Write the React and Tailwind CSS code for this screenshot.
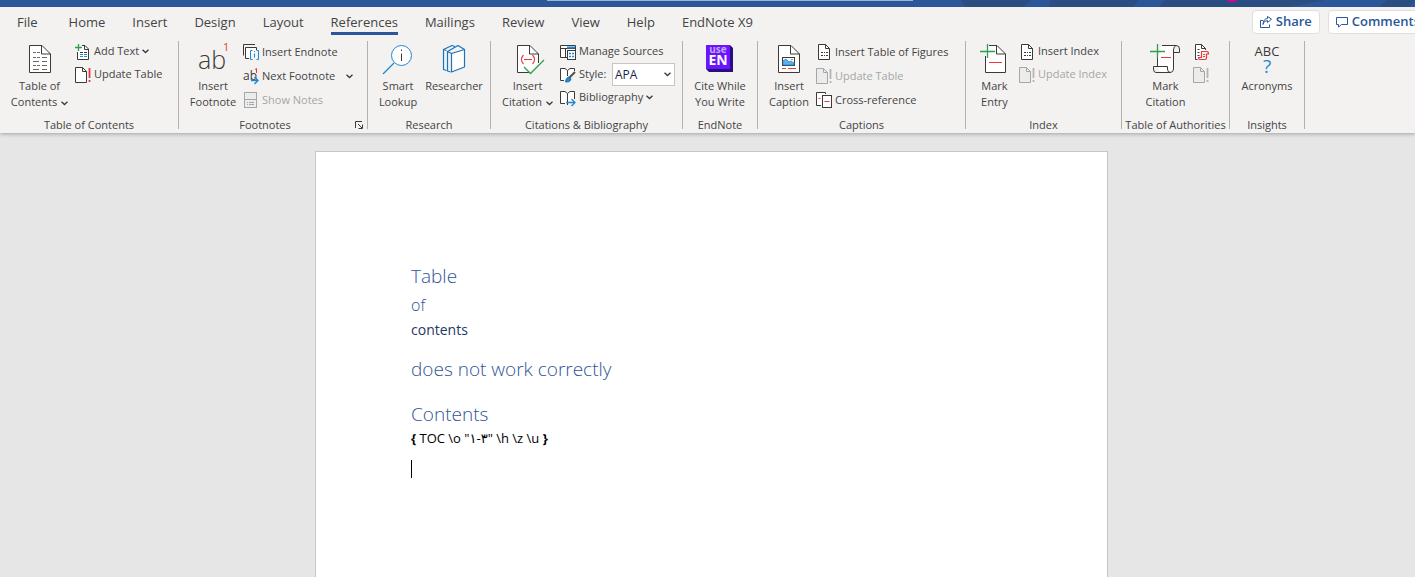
const DARK = "#3b3a39";
const GREY = "#a6a6a6";
const BLUE = "#1e88d0";
const RED = "#e8393c";
const GREEN = "#2f9e4f";

const Svg = ({ w = 16, h = 16, children, className = "" }) => (
  <svg
    width={w}
    height={h}
    viewBox={`0 0 ${w} ${h}`}
    fill="none"
    stroke={DARK}
    className={`shrink-0 overflow-visible ${className}`}
    aria-hidden="true"
  >
    {children}
  </svg>
);

const Chevron = () => (
  <Svg w={7} h={5} className="inline-block">
    <path d="M0.5 0.8 L3.5 3.6 L6.5 0.8" strokeWidth="1.3" />
  </Svg>
);

/* ---------- large icons ---------- */

const TocIcon = () => (
  <Svg w={32} h={32}>
    <path d="M5.5 1.5 H18 L26.5 10 V28.5 H5.5 Z" fill="#fff" />
    <path d="M17.5 1.5 V10 H26.5" />
    <path
      d="M9 8.5h3M13 8.5h3M9 13.5h3M13 13.5h3M18 13.5h5M9 17.5h6M18 17.5h5M9 21.5h3M13 21.5h3M18 21.5h5M9 25.5h6M18 25.5h5"
      stroke="#6b6a69"
    />
  </Svg>
);

const FootnoteIcon = () => (
  <Svg w={32} h={32}>
    <text x="1" y="25" fontSize="25" fontWeight="300" fill={DARK} stroke="none" fontFamily="Open Sans, sans-serif">
      ab
    </text>
    <text x="26" y="7" fontSize="11" fill={RED} stroke="none" fontFamily="Open Sans, sans-serif">
      1
    </text>
  </Svg>
);

const SmartLookupIcon = () => (
  <Svg w={32} h={32}>
    <circle cx="19.5" cy="11.5" r="10" fill="#fff" stroke={BLUE} />
    <path d="M12 19 L1 30" stroke={BLUE} strokeWidth="1.3" />
    <path d="M19.5 9.5 V17 M19.5 5.5 V7" />
  </Svg>
);

const ResearcherIcon = () => (
  <Svg w={32} h={32}>
    <g stroke="#1a73bd" strokeWidth="1.2" strokeLinejoin="round">
      <path d="M8.5 26.5 L5.5 25.5 V5.5 L14 1.5 L17 2.5" />
      <path d="M5.5 5.5 L8.5 6.5" />
      <path d="M12.5 28 L9.5 27 V7.5 L20 1.5 L26.5 5.5" />
      <path d="M9.5 7.5 L13.5 9.5" />
      <path d="M13.5 9.5 L26.5 5.5 V23 L13.5 28 Z" fill="#fff" />
    </g>
  </Svg>
);

const CitationIcon = () => (
  <Svg w={32} h={32}>
    <path d="M17 28.5 H5.5 V1.5 H18 L26.5 10 V19" fill="#fff" />
    <path d="M17.5 1.5 V10 H26.5" />
    <path d="M11.5 11 Q7.5 15.5 11.5 20 M20.5 11 Q24.5 15.5 20.5 20 M12 15.5 H20" stroke={RED} strokeWidth="1.2" />
    <path d="M12 23 L18.5 29.5 L32 16" stroke={GREEN} strokeWidth="1.3" />
  </Svg>
);

const EndNoteIcon = () => (
  <Svg w={32} h={32}>
    <path d="M2 1 H26 L29 4 V28 H5 L2 25 Z" fill="#2a0d80" stroke="none" />
    <rect x="2" y="1" width="24" height="24" fill="#6a14ff" stroke="none" />
    <text x="14" y="9" fontSize="10" fontWeight="700" textAnchor="middle" fill="#c3a3f5" stroke="none" fontFamily="Open Sans, sans-serif">
      use
    </text>
    <text x="14" y="21" fontSize="14" fontWeight="700" textAnchor="middle" fill="#fff" stroke="none" fontFamily="Open Sans, sans-serif">
      EN
    </text>
  </Svg>
);

const CaptionIcon = () => (
  <Svg w={32} h={32}>
    <path d="M5.5 1.5 H18 L26.5 10 V28.5 H5.5 Z" fill="#fff" />
    <path d="M17.5 1.5 V10 H26.5" />
    <rect x="9.5" y="13.5" width="12" height="8" />
    <path d="M10 21 V17 L13 15 L16 18 L18 17 L21 19 V21 Z" fill="#5eb0ea" stroke={BLUE} strokeWidth="0.8" />
    <path d="M18 15.5 h2" stroke="#d9902f" />
    <path d="M9 24.5 h4 M15 24.5 h8" stroke={RED} />
  </Svg>
);

const MarkEntryIcon = () => (
  <Svg w={32} h={32}>
    <path d="M10 1.5 H18 L26.5 10 V28.5 H6.5 V12" fill="#fff" />
    <path d="M17.5 1.5 V10 H26.5" />
    <path d="M10 18.5 h13" stroke={RED} />
    <path d="M1 7.5 h15 M8.5 0 v14" stroke={GREEN} strokeWidth="1.3" />
  </Svg>
);

const MarkCitationIcon = () => (
  <Svg w={32} h={32}>
    <path d="M12 1.5 H26 Q23.5 3 23.5 6 V28.5 H10 L7.5 22 V11 Z" fill="#fff" stroke="none" />
    <path d="M12 1.5 H26 Q29.5 1.5 29.5 5 V8.5 H23.5 M26 1.5 Q23.5 2.5 23.5 6 V25 Q23.5 28.5 20 28.5 H6 Q3.5 28.5 3.5 25 V22.5 H17.5 V25 Q17.5 28.5 20.5 28.5 M7.5 12 V22" />
    <path d="M11 13.5 h10" stroke={RED} />
    <path d="M0 7.5 h15 M7.5 0 v14" stroke={GREEN} strokeWidth="1.3" />
  </Svg>
);

const AcronymsIcon = () => (
  <Svg w={32} h={32}>
    <text x="16" y="12" fontSize="13" textAnchor="middle" fill={DARK} stroke="none" fontFamily="Open Sans, sans-serif">
      ABC
    </text>
    <text x="16" y="29" fontSize="19" textAnchor="middle" fill={BLUE} stroke="none" fontFamily="Open Sans, sans-serif">
      ?
    </text>
  </Svg>
);

/* ---------- small icons ---------- */

const AddTextIcon = () => (
  <Svg>
    <path d="M7 1.5 H10 L13.5 5 V15.5 H2.5 V8" fill="#fff" />
    <path d="M9.5 1.5 V5.5 H13.5" />
    <path d="M5 8.5h3M9 8.5h3" />
    <path d="M5 10.5h3M9 10.5h3M5 12.5h3M9 12.5h3" stroke={BLUE} />
    <path d="M0 3.5 h7 M3.5 0 v7" stroke={GREEN} strokeWidth="1.3" />
  </Svg>
);

const UpdateIcon = ({ disabled }) => (
  <Svg>
    <path d="M0.5 0.5 H7.5 L11.5 4.5 V15.5 H0.5 Z" stroke={disabled ? GREY : DARK} fill={disabled ? "#ececec" : "#fff"} />
    <path d="M7.5 0.5 V4.5 H11.5" stroke={disabled ? GREY : DARK} />
    <path d="M14.5 1 V11 M14.5 13 V15" stroke={disabled ? "#b4b4b4" : RED} strokeWidth="1.8" />
  </Svg>
);

const EndnoteIcon = () => (
  <Svg>
    <path d="M0.5 11.5 V0.5 H12" />
    <path d="M6 14.5 H2.5 V3.5 H13.5 V6" fill="#fff" />
    <path d="M9.5 6.5 H7.5 V15.5 H9.5 M13.5 6.5 H15.5 V15.5 H13.5 M11.5 9.5 V13.5 M11.5 7 V8" stroke={BLUE} />
  </Svg>
);

const NextFootnoteIcon = () => (
  <Svg>
    <text x="0" y="12" fontSize="12" fill={DARK} stroke="none" fontFamily="Open Sans, sans-serif">
      ab
    </text>
    <path d="M12 1.5 L13.5 0.5 V5" stroke={RED} />
    <path d="M8 12.5 H14.5 M11.5 9 L15 12.5 L11.5 16" stroke={BLUE} strokeWidth="1.4" />
  </Svg>
);

const ShowNotesIcon = () => (
  <Svg>
    <g stroke={GREY}>
      <rect x="1.5" y="0.5" width="12" height="15" fill="#ececec" />
      <path d="M1.5 7.5 H13.5 M4 10.5h1M6 10.5h5M4 12.5h1M6 12.5h5" />
    </g>
  </Svg>
);

const ManageSourcesIcon = () => (
  <Svg>
    <path d="M7 13.5 H0.5 V1.5 H15.5 V6" fill="#fff" />
    <path d="M0.5 4.5 H15.5 M5.5 4.5 V13.5" />
    <path d="M7 3.5 H15" stroke={BLUE} strokeWidth="2" />
    <rect x="7.5" y="6.5" width="8" height="9" fill="#fff" />
    <path d="M9 9.5h2M12 9.5h2M9 12.5h2M12 12.5h2" stroke={BLUE} strokeWidth="1.6" />
  </Svg>
);

const StyleIcon = () => (
  <Svg>
    <path d="M4 13.5 H0.5 V1.5 H5 L7.5 3.5 L10 1.5 H14.5 V4 M7.5 3.5 V9" fill="#fff" />
    <path d="M15 5 L9 11" strokeWidth="2.2" stroke="#555" />
    <path d="M9.5 10 Q6 10 5.5 15 Q10.5 15.5 11 12 Z" fill={BLUE} stroke="#1466a8" strokeWidth="0.8" />
  </Svg>
);

const BibliographyIcon = () => (
  <Svg>
    <path d="M5 13.5 H0.5 V1.5 H5 L7.5 3.5 L10 1.5 H14.5 V9 M7.5 3.5 V15" fill="#fff" />
    <path d="M6 12.5 H15 M11.5 9 L15 12.5 L11.5 16" stroke={BLUE} strokeWidth="1.3" />
  </Svg>
);

const SmallDocIcon = () => (
  <Svg>
    <path d="M2.5 0.5 H9.5 L13.5 4.5 V15.5 H2.5 Z" fill="#fff" />
    <path d="M9.5 0.5 V4.5 H13.5" />
    <path d="M5 8.5h2M8 8.5h1M10 8.5h2M5 11.5h2M8 11.5h1M10 11.5h2" />
  </Svg>
);

const CrossRefIcon = () => (
  <Svg>
    <path d="M5 13.5 H0.5 V0.5 H9.5 V2" fill="#fff" />
    <rect x="6.5" y="3.5" width="9" height="12" fill="#fff" />
    <path d="M2.5 6.5 h2 M8.5 9.5 h5" stroke={RED} />
  </Svg>
);

const InsertToaIcon = () => (
  <Svg>
    <path d="M4.5 15.5 H2.5 V0.5 H8.5 L12.5 4.5 V6" fill="#fff" />
    <path d="M8.5 0.5 V4.5 H12.5 M4.5 5.5h2M4.5 8.5h2M4.5 11.5h2" />
    <path
      d="M8.5 7.5 H14 Q15.5 7.5 15.5 10 H13.5 V14 Q13.5 15.5 12 15.5 H7 Q5.5 15.5 5.5 13.5 H8.5 Z M10 10.5h2M10 12.5h2"
      stroke={RED}
      strokeWidth="1.2"
    />
  </Svg>
);

/* ---------- building blocks ---------- */

const Group = ({ label, width, launcher, center, children }) => (
  <>
    <section aria-label={label} className={`flex shrink-0 flex-col ${width}`}>
      <div className={`flex h-[77px] items-start gap-1 ${center ? "justify-center" : "pl-2"}`}>{children}</div>
      <div className="flex h-4 items-center">
        <h2 className="flex-1 text-center leading-4 whitespace-nowrap">{label}</h2>
        {launcher && (
          <button aria-label={`${label} settings`} className="px-1">
            <Svg w={8} h={8}>
              <path d="M7 0.5 H0.5 V7 M3 3 L7 7 M7.5 3.5 V7.5 H3.5" />
            </Svg>
          </button>
        )}
      </div>
    </section>
    <div className="mt-px h-[88px] w-px shrink-0 bg-[#b3b0ad]" />
  </>
);

const BigButton = ({ icon, lines, width, chevron }) => (
  <button className={`flex shrink-0 flex-col items-center pt-1 ${width}`}>
    {icon}
    <span className="mt-0.5 block text-center leading-4 whitespace-nowrap">
      {lines[0]}
      {lines[1] && (
        <>
          <br />
          {lines[1]}
        </>
      )}
      {chevron && (
        <span className="ml-1 inline-flex items-center align-middle">
          <Chevron />
        </span>
      )}
    </span>
  </button>
);

const SmallButton = ({ icon, label, chevron, split, disabled, tall, ariaLabel }) => (
  <button
    disabled={disabled}
    aria-label={ariaLabel}
    className={`flex items-center gap-[3px] whitespace-nowrap ${tall ? "h-6" : "h-[23px]"} ${
      disabled ? "text-[#a6a6a6]" : ""
    }`}
  >
    {icon}
    {label && <span className={split ? "mr-2" : ""}>{label}</span>}
    {(chevron || split) && <Chevron />}
  </button>
);

const tabs = ["Home", "Insert", "Design", "Layout", "References", "Mailings", "Review", "View", "Help", "EndNote X9"];

const TitleBar = () => (
  <div className="flex h-[7px] justify-end overflow-hidden bg-[#2b579a]">
    <div className="mr-8 h-px w-[366px] bg-[#9db4d6]" />
    <svg width="470" height="7" viewBox="0 0 470 7" aria-hidden="true">
      <path d="M16 0 H86 L78 7 H20 Z M106 0 H194 L188 7 H104 Z M220 0 H380 L345 7 H214 Z M442 0 H470 L464 7 H434 Z" fill="#2a4e82" />
      <circle cx="287" cy="-6" r="8" fill="#e3008c" />
    </svg>
  </div>
);

const TabRow = () => (
  <div className="flex h-[30px] items-start justify-between overflow-hidden">
    <nav className="flex gap-[27px] pl-[17px] text-[13px] leading-[16px]">
      <a href="#file" className="mr-1 pt-[7px]">
        File
      </a>
      {tabs.map((t) => (
        <a
          key={t}
          href={`#${t}`}
          className={`whitespace-nowrap pt-[7px] ${
            t === "References" ? "border-b-3 border-[#2b579a] pb-0.5 font-medium" : ""
          }`}
        >
          {t}
        </a>
      ))}
    </nav>
    <div className="-mr-[13px] flex shrink-0 gap-2 pt-[3px] text-[13px] font-semibold text-[#2b579a]">
      <button className="flex h-6 items-center gap-1 rounded-sm border border-[#e1dfdd] bg-white px-[7px]">
        <Svg w={12} h={12}>
          <path
            d="M3 4.5 H0.5 V11.5 H9.5 V8.5 M3 8.5 Q3.5 4.5 7.5 4.5 V6.5 L11.5 3.2 L7.5 0.5 V2.5 Q3 3 3 8.5"
            stroke="#2b579a"
          />
        </Svg>
        Share
      </button>
      <button className="flex h-6 items-center gap-1 rounded-sm border border-[#e1dfdd] bg-white px-[7px]">
        <Svg w={12} h={12}>
          <path d="M0.5 1.5 H11.5 V8.5 H5.5 L2.5 11 V8.5 H0.5 Z" stroke="#2b579a" />
        </Svg>
        Comments
      </button>
    </div>
  </div>
);

const Ribbon = () => (
  <div className="flex pt-[3px] text-[11px]">
    <Group label="Table of Contents" width="w-[178px]">
      <BigButton icon={<TocIcon />} lines={["Table of", "Contents"]} width="w-[63px]" chevron />
      <div>
        <SmallButton icon={<AddTextIcon />} label="Add Text" chevron />
        <SmallButton icon={<UpdateIcon />} label="Update Table" />
      </div>
    </Group>

    <Group label="Footnotes" width="w-[188px]" launcher>
      <BigButton icon={<FootnoteIcon />} lines={["Insert", "Footnote"]} width="w-[52px]" />
      <div>
        <SmallButton tall icon={<EndnoteIcon />} label="Insert Endnote" />
        <SmallButton tall icon={<NextFootnoteIcon />} label="Next Footnote" split />
        <SmallButton tall icon={<ShowNotesIcon />} label="Show Notes" disabled />
      </div>
    </Group>

    <Group label="Research" width="w-[122px]">
      <BigButton icon={<SmartLookupIcon />} lines={["Smart", "Lookup"]} width="w-11" />
      <BigButton icon={<ResearcherIcon />} lines={["Researcher"]} width="w-[60px]" />
    </Group>

    <Group label="Citations & Bibliography" width="w-[191px]">
      <BigButton icon={<CitationIcon />} lines={["Insert", "Citation"]} width="w-[57px]" chevron />
      <div>
        <SmallButton icon={<ManageSourcesIcon />} label="Manage Sources" />
        <div className="flex h-[23px] items-center gap-[3px]">
          <StyleIcon />
          <label htmlFor="style" className="w-[30px]">
            Style:
          </label>
          <div className="grid items-center">
            <select
              id="style"
              defaultValue="APA"
              className="col-start-1 row-start-1 h-[23px] w-[63px] appearance-none border border-[#c8c6c4] bg-white pl-0.5 text-xs text-[#1f1f4a]"
            >
              <option>APA</option>
            </select>
            <span className="pointer-events-none col-start-1 row-start-1 mr-1 flex justify-self-end">
              <Chevron />
            </span>
          </div>
        </div>
        <SmallButton icon={<BibliographyIcon />} label="Bibliography" chevron />
      </div>
    </Group>

    <Group label="EndNote" width="w-[74px]" center>
      <BigButton icon={<EndNoteIcon />} lines={["Cite While", "You Write"]} width="w-16" />
    </Group>

    <Group label="Captions" width="w-[207px]">
      <BigButton icon={<CaptionIcon />} lines={["Insert", "Caption"]} width="w-[46px]" />
      <div>
        <SmallButton tall icon={<SmallDocIcon />} label="Insert Table of Figures" />
        <SmallButton tall icon={<UpdateIcon disabled />} label="Update Table" disabled />
        <SmallButton tall icon={<CrossRefIcon />} label="Cross-reference" />
      </div>
    </Group>

    <Group label="Index" width="w-[155px]">
      <BigButton icon={<MarkEntryIcon />} lines={["Mark", "Entry"]} width="w-[41px]" />
      <div>
        <SmallButton icon={<SmallDocIcon />} label="Insert Index" />
        <SmallButton icon={<UpdateIcon disabled />} label="Update Index" disabled />
      </div>
    </Group>

    <Group label="Table of Authorities" width="w-[107px]" center>
      <BigButton icon={<MarkCitationIcon />} lines={["Mark", "Citation"]} width="w-[47px]" />
      <div>
        <SmallButton icon={<InsertToaIcon />} ariaLabel="Insert Table of Authorities" />
        <SmallButton icon={<UpdateIcon disabled />} ariaLabel="Update Table of Authorities" disabled />
      </div>
    </Group>

    <Group label="Insights" width="w-[74px]" center>
      <BigButton icon={<AcronymsIcon />} lines={["Acronyms"]} width="w-16" />
    </Group>
  </div>
);

const DocumentPage = () => (
  <main className="flex flex-1 justify-center pt-[18px] pl-2">
    <article className="w-[793px] border border-b-0 border-[#c6c6c6] bg-white px-[95px] pt-[110px] text-[#2f5496]">
      <h1 className="text-[19px] leading-7 font-[350]">Table</h1>
      <h2 className="mt-[3px] text-[16px] leading-6 font-[350]">of</h2>
      <h3 className="text-[14px] leading-[26px] text-[#1f3763]">contents</h3>
      <h1 className="mt-3 text-[19px] leading-7 font-[350]">does not work correctly</h1>
      <h1 className="mt-[17px] text-[19px] leading-7 font-[350]">Contents</h1>
      <p className="text-[13px] leading-5 text-black">
        <b>{"{"}</b> TOC \o "<bdo dir="ltr">١-٣</bdo>" \h \z \u <b>{"}"}</b>
      </p>
      <div className="mt-3 h-[18px] w-px bg-black" />
    </article>
  </main>
);

export default function App() {
  return (
    <div className="flex min-h-screen flex-col overflow-x-hidden bg-[#e6e6e6] font-['Open_Sans','DejaVu_Sans',sans-serif] text-[#444]">
      <header className="bg-[#f3f2f1] shadow-[0_1px_4px_rgba(0,0,0,0.3)]">
        <TitleBar />
        <TabRow />
        <Ribbon />
      </header>
      <DocumentPage />
    </div>
  );
}
